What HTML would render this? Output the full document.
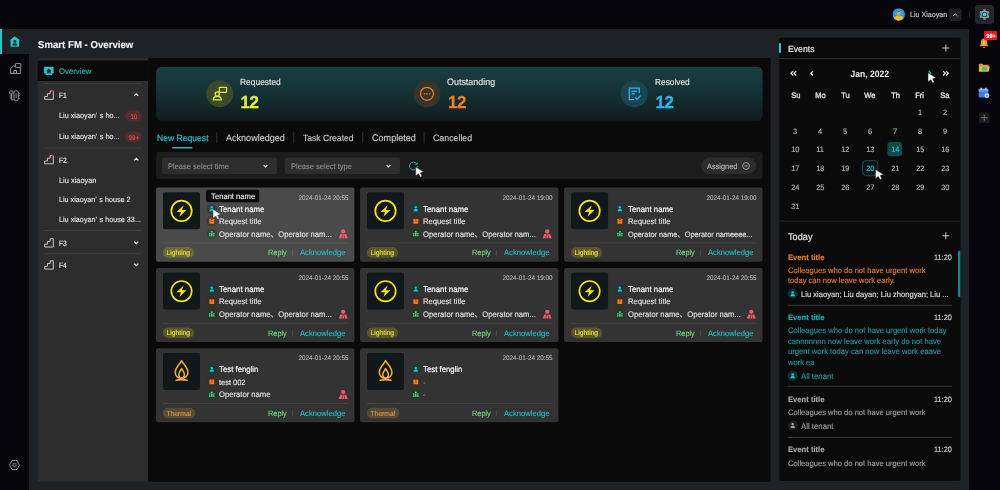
<!DOCTYPE html>
<html lang="en">
<head>
<meta charset="utf-8">
<title>Smart FM - Overview</title>
<style>
*{box-sizing:border-box;margin:0;padding:0}
html,body{width:1000px;height:490px;overflow:hidden;background:#05050b}
body{font-family:"Liberation Sans","Noto Sans CJK SC",sans-serif;color:#e6e6e6;font-size:8px;line-height:1;position:relative;-webkit-font-smoothing:antialiased}
#wrap{position:absolute;left:0;top:0;width:1000px;height:490px;overflow:hidden;will-change:transform}
.abs{position:absolute}
.t{position:absolute;white-space:nowrap;line-height:12px;height:12px;transform-origin:left center;-webkit-text-stroke:.12px}
svg{position:absolute;overflow:visible}
.cj{display:inline-block;width:.56em}
/* frame */
#topbar{left:0;top:0;width:1000px;height:29px;background:#05050b}
#leftnav{left:0;top:29px;width:29px;height:461px;background:#05050b}
#rightnav{left:969px;top:29px;width:31px;height:461px;background:#05050b}
#main{left:29px;top:29px;width:940px;height:461px;background:#1c2226}
#navact{left:0;top:29px;width:29px;height:25px;background:#1c2226;border-left:2px solid #1fc8cf}
.num{position:absolute;font-weight:bold;font-size:16.9px;line-height:18px;letter-spacing:-.3px}
</style>
</head>
<body>
<div id="wrap">
<div id="topbar" class="abs"></div>
<div id="leftnav" class="abs"></div>
<div id="rightnav" class="abs"></div>
<div id="main" class="abs"></div>
<div id="navact" class="abs"></div>

<svg style="left:37px;top:58px" width="112" height="424"><rect x="0.60" y="0.00" width="110.60" height="423.70" fill="#2d2d2d" rx="1.5"/></svg>
<svg style="left:37px;top:60px" width="112" height="21"><rect x="0.60" y="0.50" width="110.60" height="20.50" fill="#0a0a0a"/></svg>
<svg style="left:148px;top:58px" width="623" height="424"><rect x="0.10" y="0.00" width="622.50" height="423.70" fill="#0a0a0a" rx="1.5"/></svg>
<svg style="left:779px;top:37px" width="182" height="444"><rect x="0.30" y="0.60" width="181.20" height="443.30" fill="#0a0a0a" rx="2.5"/></svg>

<svg style="left:892px;top:8px" width="13" height="13"><g transform="translate(0.5 0.2)"><defs><clipPath id="av"><circle cx="6.25" cy="6.25" r="6.25"/></clipPath></defs><g clip-path="url(#av)"><rect width="12.5" height="12.5" fill="#2a9ed8"/><ellipse cx="6.25" cy="12" rx="5.6" ry="4.6" fill="#f2c417"/><rect x="5.1" y="5.5" width="2.3" height="3" fill="#c98e6a"/><circle cx="6.25" cy="4.6" r="2.2" fill="#d9a27e"/><path d="M4 4.2 Q6.25 1.2 8.5 4.2 Q6.25 2.9 4 4.2Z" fill="#3a2a20"/></g></g></svg>
<div class="t" style="top:9.02px;font-size:7.47px;color:#d0d0d0;left:909.60px;transform:matrix(0.9528,0,.0005,1,0,0);">Liu Xiaoyan</div>
<svg style="left:949px;top:8px" width="13" height="13"><rect x="0.00" y="0.50" width="12.50" height="12.50" fill="#1d2125" rx="2"/></svg>
<svg style="left:949px;top:8px" width="13" height="13"><g transform="translate(0 0.5)"><path d="M4 7.4 L6.25 5.2 L8.5 7.4" fill="none" stroke="#d8d8d8" stroke-width=".95"/></g></svg>
<svg style="left:969px;top:11px" width="1" height="7"><rect x="0.00" y="0.00" width="1.00" height="7.00" fill="#1d2226"/></svg>
<svg style="left:975px;top:5px" width="19" height="19"><rect x="0.00" y="0.00" width="19.00" height="19.00" fill="#22282c" rx="3"/></svg>
<svg style="left:978px;top:8px" width="13" height="13"><g transform="translate(0.5 0.5)"><g transform="translate(6 6)"><g fill="#8a949a"><circle r="3.9"/><rect x="-1.2" y="-5.2" width="2.4" height="10.4" rx=".5"/><rect x="-1.2" y="-5.2" width="2.4" height="10.4" rx=".5" transform="rotate(60)"/><rect x="-1.2" y="-5.2" width="2.4" height="10.4" rx=".5" transform="rotate(120)"/></g><circle r="2.6" fill="#22282c"/><circle r="1.9" fill="#1fd8e0"/></g></g></svg>
<svg style="left:9px;top:36px" width="12" height="11"><g transform="translate(0.3 0)"><path d="M5.5 .2 L10.8 4.6 L9.7 4.6 L9.7 10.8 L1.3 10.8 L1.3 4.6 L.2 4.6 Z" fill="#1fc8cf"/><circle cx="5.5" cy="5.3" r="1.5" fill="#1c2226"/><rect x="3.2" y="7.4" width="4.6" height="2.2" rx=".6" fill="#1c2226"/></g></svg>
<svg style="left:10px;top:63px" width="12" height="11"><g transform="translate(0 0)"><g fill="none" stroke="#9a9a9a" stroke-width="1" stroke-linejoin="round"><path d="M.7 10.5 V5.4 L3.7 2.5 L5.4 4"/><path d="M.7 10.5 H10.4 V4.4"/><rect x="5.5" y=".6" width="5.3" height="3.7" rx=".5"/><path d="M3.9 10.5 V7.5 H6.5 V10.5"/></g></g></svg>
<svg style="left:9px;top:90px" width="12" height="12"><g transform="translate(0 0.3)"><g fill="none" stroke="#9a9a9a" stroke-width=".95" stroke-linejoin="round"><rect x=".7" y=".7" width="3.3" height="2.9" rx=".5"/><path d="M2.3 3.6 V9.4 H4.6 M.8 5.6 H3.6 M.8 7.6 H3.6"/><rect x="5" y=".6" width="4.3" height="9.8" rx="1.6"/><path d="M9.3 3 H10.9 M9.3 5.5 H10.9 M9.3 8 H10.9"/><path d="M7.1 3 V7.6"/></g></g></svg>
<svg style="left:9px;top:459px" width="11" height="12"><g transform="translate(0 0.5)"><g fill="none" stroke="#9a9a9a" stroke-width=".9"><path d="M3 .9 H8 L10.5 5.5 L8 10.1 H3 L.5 5.5 Z"/><circle cx="5.5" cy="5.5" r="1.7"/></g></g></svg>
<div class="t" style="top:39.02px;font-size:9.94px;color:#f2f2f2;font-weight:bold;left:38.00px;transform:matrix(0.9712,0,.0005,1,0,0);">Smart FM - Overview</div>
<svg style="left:979px;top:38px" width="10" height="11"><g transform="translate(0 0)"><path d="M5 .6 C2.6 .6 1.9 2.6 1.9 4.6 C1.9 6.6 1.2 7.4 .5 8.2 H9.5 C8.8 7.4 8.1 6.6 8.1 4.6 C8.1 2.6 7.4 .6 5 .6Z" fill="#e9963a"/><path d="M3.9 8.9 A1.1 1.1 0 0 0 6.1 8.9Z" fill="#e9963a"/><rect x="4.2" y="3.2" width="1.6" height="3.4" rx=".6" fill="#f6c77a"/></g></svg>
<svg style="left:984px;top:31px" width="13" height="9"><rect x="0.00" y="0.00" width="13.00" height="9.00" fill="#f0141e" rx="1"/></svg>
<div class="t" style="top:30.02px;font-size:5.94px;color:#fff;font-weight:bold;left:985.56px;transform:matrix(0.9527,0,.0005,1,0,0);transform-origin:center center;">99+</div>
<svg style="left:978px;top:61px" width="13" height="12"><g transform="translate(0.2 0.8)"><path d="M.6 2 H4.2 L5.2 3 H10.4 V9.8 H.6Z" fill="#d99a1f"/><path d="M2.2 4.6 H11.6 L10.4 9.8 H.6Z" fill="#f1c232"/><rect x="3.6" y="5.4" width="5.4" height="3.2" fill="#4aa3e0"/><rect x="3.6" y="7.2" width="5.4" height="1.4" fill="#5fb85f"/></g></svg>
<svg style="left:977px;top:87px" width="13" height="12"><g transform="translate(0.9 0.2)"><rect x=".8" y="1.6" width="9.6" height="8.6" rx="1" fill="#3b7de0"/><rect x=".8" y="1.6" width="9.6" height="2.6" rx="1" fill="#6ea2f0"/><rect x="2.6" y=".5" width="1.2" height="2.2" fill="#d8e6ff"/><rect x="7.4" y=".5" width="1.2" height="2.2" fill="#d8e6ff"/><circle cx="9" cy="8.4" r="2.4" fill="#dfe9f7"/><path d="M9 7 V9.8 M7.6 8.4 H10.4" stroke="#3b7de0" stroke-width=".8"/></g></svg>
<svg style="left:979px;top:112px" width="11" height="11"><rect x="0.00" y="0.50" width="10.50" height="10.50" fill="#1c1c1c" rx="1"/></svg>
<svg style="left:979px;top:112px" width="11" height="11"><g transform="translate(0 0.5)"><path d="M5.25 2 V8.5 M2 5.25 H8.5" stroke="#7a7a7a" stroke-width=".9"/></g></svg>
<svg style="left:44px;top:66px" width="10" height="10"><g transform="translate(0 0.8)"><rect x="0" y="0" width="9.6" height="7" rx="1" fill="#1fc8cf"/><rect x="1.6" y="7" width="6.4" height="1.3" fill="#1fc8cf"/><path d="M4.8 1.6 L7.4 3.9 H6.7 V6 H2.9 V3.9 H2.2Z" fill="#0a0a0a"/></g></svg>
<div class="t" style="top:66.02px;font-size:8.17px;color:#1fb9c1;left:58.70px;transform:matrix(0.9529,0,.0005,1,0,0);">Overview</div>
<svg style="left:43px;top:83px" width="99" height="1"><rect x="0.50" y="0.00" width="98.00" height="1.00" fill="#3d3d3d"/></svg>
<svg style="left:44px;top:90px" width="10" height="11"><g transform="translate(0 0.3)"><path d="M.7 9 V6.2 H3.4 V3.4 H6.2 V.7 H9.3 V9 Z" fill="none" stroke="#c8c8c8" stroke-width="1" stroke-linejoin="miter"/><circle cx="8.6" cy=".7" r="1.15" fill="#f01414"/></g></svg>
<div class="t" style="top:90.02px;font-size:7.68px;color:#f0f0f0;left:59.00px;-webkit-text-stroke:.12px #f0f0f0;transform:matrix(0.8696,0,.0005,1,0,0);">F1</div>
<svg style="left:136px;top:94px" width="2" height="2"><g transform="translate(0.3 0.9)"><path d="M-2 1 L0 -1 L2 1" fill="none" stroke="#ececec" stroke-width="1.25"/></g></svg>
<div class="t" style="top:110.02px;font-size:7.64px;color:#e4e4e4;left:58.70px;transform:matrix(0.9525,0,.0005,1,0,0);">Liu xiaoyan<span class="cj">’</span>s ho...</div>
<svg style="left:125px;top:110px" width="17" height="11"><rect x="0.00" y="0.50" width="16.60" height="10.40" fill="#542c2c" rx="5.2"/></svg>
<div class="t" style="top:111.02px;font-size:6.8px;color:#dc5350;left:129.52px;transform:matrix(0.9,0,.0005,1,0,0);transform-origin:center center;">10</div>
<div class="t" style="top:131.02px;font-size:7.64px;color:#e4e4e4;left:58.70px;transform:matrix(0.9525,0,.0005,1,0,0);">Liu xiaoyan<span class="cj">’</span>s ho...</div>
<svg style="left:125px;top:131px" width="17" height="11"><rect x="0.00" y="0.50" width="16.60" height="10.40" fill="#542c2c" rx="5.2"/></svg>
<div class="t" style="top:132.02px;font-size:6.8px;color:#dc5350;left:127.53px;transform:matrix(0.9,0,.0005,1,0,0);transform-origin:center center;">99+</div>
<svg style="left:43px;top:147px" width="99" height="2"><rect x="0.50" y="0.60" width="98.00" height="1.00" fill="#3d3d3d"/></svg>
<svg style="left:44px;top:154px" width="10" height="11"><g transform="translate(0 0.8)"><path d="M.7 9 V6.2 H3.4 V3.4 H6.2 V.7 H9.3 V9 Z" fill="none" stroke="#c8c8c8" stroke-width="1" stroke-linejoin="miter"/><circle cx="8.6" cy=".7" r="1.15" fill="#f01414"/></g></svg>
<div class="t" style="top:155.02px;font-size:7.68px;color:#f0f0f0;left:59.00px;-webkit-text-stroke:.12px #f0f0f0;transform:matrix(0.8696,0,.0005,1,0,0);">F2</div>
<svg style="left:136px;top:159px" width="2" height="2"><g transform="translate(0.3 0.4)"><path d="M-2 1 L0 -1 L2 1" fill="none" stroke="#ececec" stroke-width="1.25"/></g></svg>
<div class="t" style="top:175.02px;font-size:7.78px;color:#e4e4e4;left:58.70px;transform:matrix(0.9529,0,.0005,1,0,0);">Liu xiaoyan</div>
<div class="t" style="top:194.02px;font-size:7.54px;color:#e4e4e4;left:58.70px;transform:matrix(0.9529,0,.0005,1,0,0);">Liu xiaoyan<span class="cj">’</span>s house 2</div>
<div class="t" style="top:214.02px;font-size:7.59px;color:#e4e4e4;left:58.70px;transform:matrix(0.9525,0,.0005,1,0,0);">Liu xiaoyan<span class="cj">’</span>s house 33...</div>
<svg style="left:43px;top:230px" width="99" height="1"><rect x="0.50" y="0.00" width="98.00" height="1.00" fill="#3d3d3d"/></svg>
<svg style="left:44px;top:238px" width="10" height="10"><g transform="translate(0 0)"><path d="M.7 9 V6.2 H3.4 V3.4 H6.2 V.7 H9.3 V9 Z" fill="none" stroke="#c8c8c8" stroke-width="1" stroke-linejoin="miter"/></g></svg>
<div class="t" style="top:238.02px;font-size:7.68px;color:#f0f0f0;left:59.00px;-webkit-text-stroke:.12px #f0f0f0;transform:matrix(0.8696,0,.0005,1,0,0);">F3</div>
<svg style="left:136px;top:242px" width="2" height="2"><g transform="translate(0.3 0.6)"><path d="M-2 -1 L0 1 L2 -1" fill="none" stroke="#ececec" stroke-width="1.25"/></g></svg>
<svg style="left:43px;top:253px" width="99" height="2"><rect x="0.50" y="0.20" width="98.00" height="1.00" fill="#3d3d3d"/></svg>
<svg style="left:44px;top:260px" width="10" height="11"><g transform="translate(0 0.1)"><path d="M.7 9 V6.2 H3.4 V3.4 H6.2 V.7 H9.3 V9 Z" fill="none" stroke="#c8c8c8" stroke-width="1" stroke-linejoin="miter"/></g></svg>
<div class="t" style="top:260.02px;font-size:7.68px;color:#f0f0f0;left:59.00px;-webkit-text-stroke:.12px #f0f0f0;transform:matrix(0.8696,0,.0005,1,0,0);">F4</div>
<svg style="left:136px;top:264px" width="2" height="2"><g transform="translate(0.3 0.7)"><path d="M-2 -1 L0 1 L2 -1" fill="none" stroke="#ececec" stroke-width="1.25"/></g></svg>
<svg style="left:156px;top:66px" width="607" height="56"><g transform="translate(0 0)"><defs><linearGradient id="sg" x1="0" y1="0" x2="0" y2="1"><stop offset="0" stop-color="#1a3f43"/><stop offset=".45" stop-color="#163236"/><stop offset="1" stop-color="#0f1c1e"/></linearGradient></defs><rect x=".1" y=".8" width="606.5" height="54" rx="5.5" fill="url(#sg)"/></g></svg>
<svg style="left:206px;top:80px" width="28" height="28"><g transform="translate(0.3 0.3)"><circle cx="13.5" cy="13.5" r="13.5" fill="#3a4a2c"/></g></svg>
<svg style="left:212px;top:86px" width="16" height="16"><g transform="translate(0.3 0.3) scale(1.25 1.25)"><g fill="none" stroke="#e4f03a" stroke-width=".95"><rect x="5.6" y=".8" width="5.8" height="4" rx=".4"/><circle cx="4" cy="6.2" r="1.7"/><path d="M.8 10.8 C.8 8.6 2.2 8 4 8 C5.8 8 7.2 8.6 7.2 10.8 Z"/></g></g></svg>
<div class="t" style="top:76.02px;font-size:8.85px;color:#e4e4e4;left:239.50px;transform:matrix(0.9528,0,.0005,1,0,0);">Requested</div>
<div class="num" style="left:240.4px;top:93.9px;color:#e0f03c;-webkit-text-stroke:.3px #e0f03c">12</div>
<svg style="left:413px;top:80px" width="28" height="28"><g transform="translate(0.5 0.3)"><circle cx="13.5" cy="13.5" r="13.5" fill="#37342b"/></g></svg>
<svg style="left:419px;top:86px" width="16" height="16"><g transform="translate(0.5 0.3) scale(1.25 1.25)"><g fill="none" stroke="#ef7d2a"><circle cx="6" cy="6" r="5.2" stroke-width="1"/><path d="M3.4 6 H8.6" stroke-width="1" stroke-dasharray="1.2 .8"/></g></g></svg>
<div class="t" style="top:76.02px;font-size:9.38px;color:#e4e4e4;left:447.00px;transform:matrix(0.9526,0,.0005,1,0,0);">Outstanding</div>
<div class="num" style="left:447.9px;top:93.9px;color:#ef7d2a;-webkit-text-stroke:.3px #ef7d2a">12</div>
<svg style="left:620px;top:80px" width="28" height="28"><g transform="translate(0.8 0.3)"><circle cx="13.5" cy="13.5" r="13.5" fill="#1b4550"/></g></svg>
<svg style="left:626px;top:86px" width="16" height="16"><g transform="translate(0.8 0.3) scale(1.25 1.25)"><g fill="none" stroke="#2bb5ef" stroke-width="1"><path d="M10 5.4 V1.4 H2 V10.6 H6"/><path d="M3.8 4 H8.2 M3.8 6 H6.4" /><path d="M6.8 9 L8.2 10.4 L11 7.4"/></g></g></svg>
<div class="t" style="top:76.02px;font-size:8.76px;color:#e4e4e4;left:654.50px;transform:matrix(0.9526,0,.0005,1,0,0);">Resolved</div>
<div class="num" style="left:655.4px;top:93.9px;color:#2bb5ef;-webkit-text-stroke:.3px #2bb5ef">12</div>
<div class="t" style="top:132.02px;font-size:9.02px;color:#21c0c8;left:156.80px;-webkit-text-stroke:.2px #21c0c8;transform:matrix(0.9523,0,.0005,1,0,0);">New Request</div>
<div class="t" style="top:132.02px;font-size:9.5px;color:#cfcfcf;left:225.80px;transform:matrix(0.9528,0,.0005,1,0,0);">Acknowledged</div>
<div class="t" style="top:132.02px;font-size:9.03px;color:#cfcfcf;left:303.00px;transform:matrix(0.9522,0,.0005,1,0,0);">Task Created</div>
<div class="t" style="top:132.02px;font-size:9.52px;color:#cfcfcf;left:371.50px;transform:matrix(0.9525,0,.0005,1,0,0);">Completed</div>
<div class="t" style="top:132.02px;font-size:9.24px;color:#cfcfcf;left:432.50px;transform:matrix(0.9528,0,.0005,1,0,0);">Cancelled</div>
<svg style="left:216px;top:132px" width="2" height="12"><rect x="0.30" y="0.30" width="1.00" height="11.00" fill="#333333"/></svg>
<svg style="left:293px;top:132px" width="2" height="12"><rect x="0.30" y="0.30" width="1.00" height="11.00" fill="#333333"/></svg>
<svg style="left:362px;top:132px" width="2" height="12"><rect x="0.30" y="0.30" width="1.00" height="11.00" fill="#333333"/></svg>
<svg style="left:423px;top:132px" width="2" height="12"><rect x="0.60" y="0.30" width="1.00" height="11.00" fill="#333333"/></svg>
<svg style="left:172px;top:146px" width="21" height="3"><rect x="0.00" y="0.90" width="20.50" height="1.50" fill="#1fb9c1" rx="0.75"/></svg>
<svg style="left:156px;top:152px" width="607" height="27"><rect x="0.20" y="0.00" width="606.30" height="27.00" fill="#1c1c1c" rx="2"/></svg>
<svg style="left:162px;top:157px" width="115" height="17"><rect x="0.00" y="0.50" width="115.00" height="16.50" fill="#2d2d2d" rx="2"/></svg>
<div class="t" style="top:161.02px;font-size:7.9px;color:#8c8c8c;left:168.30px;transform:matrix(0.9523,0,.0005,1,0,0);">Please select time</div>
<svg style="left:265px;top:165px" width="2" height="2"><g transform="translate(0.5 0.9)"><path d="M-1.8 -.8 L0 1 L1.8 -.8" fill="none" stroke="#e4e4e4" stroke-width="1.25"/></g></svg>
<svg style="left:285px;top:157px" width="115" height="17"><rect x="0.00" y="0.50" width="115.00" height="16.50" fill="#2d2d2d" rx="2"/></svg>
<div class="t" style="top:161.02px;font-size:7.9px;color:#8c8c8c;left:291.30px;transform:matrix(0.952,0,.0005,1,0,0);">Please select type</div>
<svg style="left:388px;top:165px" width="2" height="2"><g transform="translate(0.5 0.9)"><path d="M-1.8 -.8 L0 1 L1.8 -.8" fill="none" stroke="#e4e4e4" stroke-width="1.25"/></g></svg>
<svg style="left:408px;top:160px" width="11" height="11"><g transform="translate(0.4 0.6)"><path d="M8.2 3.2 A3.9 3.9 0 1 0 8.9 5.4" fill="none" stroke="#1fb9c1" stroke-width=".9"/><path d="M8.8 1.6 V3.6 H6.8" fill="none" stroke="#1fb9c1" stroke-width=".9"/></g></svg>
<svg style="left:701px;top:157px" width="56" height="17"><rect x="0.30" y="0.50" width="55.00" height="16.50" fill="#2d2d2d" rx="8.25"/></svg>
<div class="t" style="top:161.02px;font-size:7.79px;color:#b8b8b8;left:707.00px;transform:matrix(0.9522,0,.0005,1,0,0);">Assigned</div>
<svg style="left:742px;top:162px" width="8" height="8"><g transform="translate(0 0)"><circle cx="4" cy="4" r="3.4" fill="none" stroke="#b8b8b8" stroke-width=".8"/><path d="M2.2 4 H5.8" stroke="#b8b8b8" stroke-width=".8"/></g></svg>
<svg style="left:156px;top:187px" width="199" height="75"><rect x="0.00" y="0.60" width="198.40" height="74.10" fill="#4a4a4a" rx="2"/></svg>
<svg style="left:163px;top:192px" width="37" height="38"><rect x="0.00" y="0.30" width="37.00" height="37.00" fill="#12171a" rx="2"/></svg>
<svg style="left:163px;top:192px" width="37" height="38"><g transform="translate(0 0.3)"><circle cx="18.5" cy="18.6" r="10.2" fill="none" stroke="#f5e616" stroke-width="1.7"/><path d="M20.6 13 L13.6 19.6 H18 L16.4 24.4 L23.4 17.6 H19 Z" fill="#f5e616"/></g></svg>
<div class="t" style="top:192.02px;font-size:6.66px;color:#b4b4b4;left:295.56px;transform:matrix(0.9517,0,.0005,1,0,0);transform-origin:right center;">2024-01-24 20:55</div>
<svg style="left:206px;top:203px" width="11" height="11"><g transform="translate(0.7 0.8) scale(1.062 1.062)"><circle cx="4.8" cy="4.8" r="4.8" fill="rgba(14,60,64,.55)"/><circle cx="4.8" cy="3.3" r="1.15" fill="#21c3cb"/><path d="M2.7 7 C2.7 5.5 3.6 4.9 4.8 4.9 C6 4.9 6.9 5.5 6.9 7Z" fill="#21c3cb"/></g></svg>
<svg style="left:206px;top:216px" width="11" height="11"><g transform="translate(0.7 0.2) scale(1.062 1.062)"><circle cx="4.8" cy="4.8" r="4.8" fill="rgba(74,40,18,.5)"/><rect x="2.5" y="2.5" width="4.6" height="4.6" rx=".4" fill="#ef7d2a"/><rect x="4.2" y="2.5" width="1.2" height="1.3" fill="#5a3418"/><rect x="3.5" y="4.6" width="2.6" height=".8" fill="#b85d1c"/></g></svg>
<svg style="left:206px;top:228px" width="11" height="11"><g transform="translate(0.7 0.7) scale(1.062 1.062)"><circle cx="4.8" cy="4.8" r="4.8" fill="rgba(24,66,40,.5)"/><g fill="#5fe08a"><circle cx="4.8" cy="2.9" r=".85"/><rect x="4.15" y="4" width="1.3" height="3.2" rx=".4"/><circle cx="2.9" cy="4.5" r=".7"/><rect x="2.35" y="5.4" width="1.1" height="1.8" rx=".3"/><circle cx="6.7" cy="4.5" r=".7"/><rect x="6.15" y="5.4" width="1.1" height="1.8" rx=".3"/></g></g></svg>
<div class="t" style="top:204.02px;font-size:8.26px;color:#ffffff;left:219.40px;-webkit-text-stroke:.16px #fff;transform:matrix(0.9525,0,.0005,1,0,0);">Tenant name</div>
<div class="t" style="top:216.02px;font-size:8.03px;color:#e4e4e4;left:219.40px;transform:matrix(0.9525,0,.0005,1,0,0);">Request title</div>
<div class="t" style="top:229.02px;font-size:8.06px;color:#e4e4e4;left:219.40px;transform:matrix(0.9522,0,.0005,1,0,0);">Operator name、Operator nam...</div>
<svg style="left:338px;top:229px" width="10" height="10"><g transform="translate(0.7 0.2)"><g fill="#f45c66"><circle cx="4.5" cy="2.3" r="2.15"/><path d="M1.6 4.9 H3.5 L2.9 9.1 H0 Z"/><path d="M4 5.3 L4.5 4.9 L5 5.3 L5.5 9.1 H3.5 Z"/><path d="M5.5 4.9 H7.4 L9 9.1 H6.1 Z"/></g></g></svg>
<svg style="left:163px;top:242px" width="186" height="2"><rect x="0.00" y="0.40" width="185.50" height="1.00" fill="#5a5a5a"/></svg>
<svg style="left:162px;top:247px" width="32" height="11"><rect x="0.80" y="0.10" width="31.20" height="10.60" fill="rgba(245,230,22,.2)" rx="5.3"/></svg>
<div class="t" style="top:247.02px;font-size:7.05px;color:#f0e22c;left:165.96px;transform:matrix(0.9519,0,.0005,1,0,0);transform-origin:center center;">Lighting</div>
<div class="t" style="top:247.02px;font-size:7.72px;color:#6fdc7c;left:267.80px;transform:matrix(0.9527,0,.0005,1,0,0);">Reply</div>
<svg style="left:291px;top:249px" width="2" height="7"><rect x="0.80" y="0.70" width="1.00" height="6.20" fill="#606060"/></svg>
<div class="t" style="top:247.02px;font-size:8.03px;color:#22bcc6;left:300.20px;transform:matrix(0.9527,0,.0005,1,0,0);">Acknowledge</div>
<svg style="left:360px;top:187px" width="199" height="75"><rect x="0.00" y="0.60" width="198.40" height="74.10" fill="#333333" rx="2"/></svg>
<svg style="left:367px;top:192px" width="37" height="38"><rect x="0.00" y="0.30" width="37.00" height="37.00" fill="#12171a" rx="2"/></svg>
<svg style="left:367px;top:192px" width="37" height="38"><g transform="translate(0 0.3)"><circle cx="18.5" cy="18.6" r="10.2" fill="none" stroke="#f5e616" stroke-width="1.7"/><path d="M20.6 13 L13.6 19.6 H18 L16.4 24.4 L23.4 17.6 H19 Z" fill="#f5e616"/></g></svg>
<div class="t" style="top:192.02px;font-size:6.66px;color:#b4b4b4;left:499.56px;transform:matrix(0.9517,0,.0005,1,0,0);transform-origin:right center;">2024-01-24 19:00</div>
<svg style="left:410px;top:203px" width="11" height="11"><g transform="translate(0.7 0.8) scale(1.062 1.062)"><circle cx="4.8" cy="4.8" r="4.8" fill="rgba(14,60,64,.55)"/><circle cx="4.8" cy="3.3" r="1.15" fill="#21c3cb"/><path d="M2.7 7 C2.7 5.5 3.6 4.9 4.8 4.9 C6 4.9 6.9 5.5 6.9 7Z" fill="#21c3cb"/></g></svg>
<svg style="left:410px;top:216px" width="11" height="11"><g transform="translate(0.7 0.2) scale(1.062 1.062)"><circle cx="4.8" cy="4.8" r="4.8" fill="rgba(74,40,18,.5)"/><rect x="2.5" y="2.5" width="4.6" height="4.6" rx=".4" fill="#ef7d2a"/><rect x="4.2" y="2.5" width="1.2" height="1.3" fill="#5a3418"/><rect x="3.5" y="4.6" width="2.6" height=".8" fill="#b85d1c"/></g></svg>
<svg style="left:410px;top:228px" width="11" height="11"><g transform="translate(0.7 0.7) scale(1.062 1.062)"><circle cx="4.8" cy="4.8" r="4.8" fill="rgba(24,66,40,.5)"/><g fill="#5fe08a"><circle cx="4.8" cy="2.9" r=".85"/><rect x="4.15" y="4" width="1.3" height="3.2" rx=".4"/><circle cx="2.9" cy="4.5" r=".7"/><rect x="2.35" y="5.4" width="1.1" height="1.8" rx=".3"/><circle cx="6.7" cy="4.5" r=".7"/><rect x="6.15" y="5.4" width="1.1" height="1.8" rx=".3"/></g></g></svg>
<div class="t" style="top:204.02px;font-size:8.26px;color:#ffffff;left:423.40px;-webkit-text-stroke:.16px #fff;transform:matrix(0.9525,0,.0005,1,0,0);">Tenant name</div>
<div class="t" style="top:216.02px;font-size:8.03px;color:#e4e4e4;left:423.40px;transform:matrix(0.9525,0,.0005,1,0,0);">Request title</div>
<div class="t" style="top:229.02px;font-size:8.06px;color:#e4e4e4;left:423.40px;transform:matrix(0.9522,0,.0005,1,0,0);">Operator name、Operator nam...</div>
<svg style="left:542px;top:229px" width="10" height="10"><g transform="translate(0.7 0.2)"><g fill="#f45c66"><circle cx="4.5" cy="2.3" r="2.15"/><path d="M1.6 4.9 H3.5 L2.9 9.1 H0 Z"/><path d="M4 5.3 L4.5 4.9 L5 5.3 L5.5 9.1 H3.5 Z"/><path d="M5.5 4.9 H7.4 L9 9.1 H6.1 Z"/></g></g></svg>
<svg style="left:367px;top:242px" width="186" height="2"><rect x="0.00" y="0.40" width="185.50" height="1.00" fill="#444444"/></svg>
<svg style="left:366px;top:247px" width="32" height="11"><rect x="0.80" y="0.10" width="31.20" height="10.60" fill="rgba(245,230,22,.2)" rx="5.3"/></svg>
<div class="t" style="top:247.02px;font-size:7.05px;color:#f0e22c;left:369.96px;transform:matrix(0.9519,0,.0005,1,0,0);transform-origin:center center;">Lighting</div>
<div class="t" style="top:247.02px;font-size:7.72px;color:#6fdc7c;left:471.80px;transform:matrix(0.9527,0,.0005,1,0,0);">Reply</div>
<svg style="left:495px;top:249px" width="2" height="7"><rect x="0.80" y="0.70" width="1.00" height="6.20" fill="#4c4c4c"/></svg>
<div class="t" style="top:247.02px;font-size:8.03px;color:#22bcc6;left:504.20px;transform:matrix(0.9527,0,.0005,1,0,0);">Acknowledge</div>
<svg style="left:564px;top:187px" width="199" height="75"><rect x="0.10" y="0.60" width="198.40" height="74.10" fill="#333333" rx="2"/></svg>
<svg style="left:571px;top:192px" width="38" height="38"><rect x="0.10" y="0.30" width="37.00" height="37.00" fill="#12171a" rx="2"/></svg>
<svg style="left:571px;top:192px" width="38" height="38"><g transform="translate(0.1 0.3)"><circle cx="18.5" cy="18.6" r="10.2" fill="none" stroke="#f5e616" stroke-width="1.7"/><path d="M20.6 13 L13.6 19.6 H18 L16.4 24.4 L23.4 17.6 H19 Z" fill="#f5e616"/></g></svg>
<div class="t" style="top:192.02px;font-size:6.66px;color:#b4b4b4;left:703.66px;transform:matrix(0.9517,0,.0005,1,0,0);transform-origin:right center;">2024-01-24 19:00</div>
<svg style="left:614px;top:203px" width="11" height="11"><g transform="translate(0.8 0.8) scale(1.062 1.062)"><circle cx="4.8" cy="4.8" r="4.8" fill="rgba(14,60,64,.55)"/><circle cx="4.8" cy="3.3" r="1.15" fill="#21c3cb"/><path d="M2.7 7 C2.7 5.5 3.6 4.9 4.8 4.9 C6 4.9 6.9 5.5 6.9 7Z" fill="#21c3cb"/></g></svg>
<svg style="left:614px;top:216px" width="11" height="11"><g transform="translate(0.8 0.2) scale(1.062 1.062)"><circle cx="4.8" cy="4.8" r="4.8" fill="rgba(74,40,18,.5)"/><rect x="2.5" y="2.5" width="4.6" height="4.6" rx=".4" fill="#ef7d2a"/><rect x="4.2" y="2.5" width="1.2" height="1.3" fill="#5a3418"/><rect x="3.5" y="4.6" width="2.6" height=".8" fill="#b85d1c"/></g></svg>
<svg style="left:614px;top:228px" width="11" height="11"><g transform="translate(0.8 0.7) scale(1.062 1.062)"><circle cx="4.8" cy="4.8" r="4.8" fill="rgba(24,66,40,.5)"/><g fill="#5fe08a"><circle cx="4.8" cy="2.9" r=".85"/><rect x="4.15" y="4" width="1.3" height="3.2" rx=".4"/><circle cx="2.9" cy="4.5" r=".7"/><rect x="2.35" y="5.4" width="1.1" height="1.8" rx=".3"/><circle cx="6.7" cy="4.5" r=".7"/><rect x="6.15" y="5.4" width="1.1" height="1.8" rx=".3"/></g></g></svg>
<div class="t" style="top:204.02px;font-size:8.26px;color:#ffffff;left:627.50px;-webkit-text-stroke:.16px #fff;transform:matrix(0.9525,0,.0005,1,0,0);">Tenant name</div>
<div class="t" style="top:216.02px;font-size:8.03px;color:#e4e4e4;left:627.50px;transform:matrix(0.9525,0,.0005,1,0,0);">Request title</div>
<div class="t" style="top:229.02px;font-size:7.71px;color:#e4e4e4;left:627.50px;transform:matrix(0.9528,0,.0005,1,0,0);">Operator name、Operator nameeee...</div>
<svg style="left:571px;top:242px" width="186" height="2"><rect x="0.10" y="0.40" width="185.50" height="1.00" fill="#444444"/></svg>
<svg style="left:570px;top:247px" width="33" height="11"><rect x="0.90" y="0.10" width="31.20" height="10.60" fill="rgba(245,230,22,.2)" rx="5.3"/></svg>
<div class="t" style="top:247.02px;font-size:7.05px;color:#f0e22c;left:574.06px;transform:matrix(0.9519,0,.0005,1,0,0);transform-origin:center center;">Lighting</div>
<div class="t" style="top:247.02px;font-size:7.72px;color:#6fdc7c;left:675.90px;transform:matrix(0.9527,0,.0005,1,0,0);">Reply</div>
<svg style="left:699px;top:249px" width="2" height="7"><rect x="0.90" y="0.70" width="1.00" height="6.20" fill="#4c4c4c"/></svg>
<div class="t" style="top:247.02px;font-size:8.03px;color:#22bcc6;left:708.30px;transform:matrix(0.9527,0,.0005,1,0,0);">Acknowledge</div>
<svg style="left:156px;top:267px" width="199" height="75"><rect x="0.00" y="0.90" width="198.40" height="74.10" fill="#333333" rx="2"/></svg>
<svg style="left:163px;top:272px" width="37" height="38"><rect x="0.00" y="0.60" width="37.00" height="37.00" fill="#12171a" rx="2"/></svg>
<svg style="left:163px;top:272px" width="37" height="38"><g transform="translate(0 0.6)"><circle cx="18.5" cy="18.6" r="10.2" fill="none" stroke="#f5e616" stroke-width="1.7"/><path d="M20.6 13 L13.6 19.6 H18 L16.4 24.4 L23.4 17.6 H19 Z" fill="#f5e616"/></g></svg>
<div class="t" style="top:272.02px;font-size:6.66px;color:#b4b4b4;left:295.56px;transform:matrix(0.9517,0,.0005,1,0,0);transform-origin:right center;">2024-01-24 20:55</div>
<svg style="left:206px;top:284px" width="11" height="11"><g transform="translate(0.7 0.1) scale(1.062 1.062)"><circle cx="4.8" cy="4.8" r="4.8" fill="rgba(14,60,64,.55)"/><circle cx="4.8" cy="3.3" r="1.15" fill="#21c3cb"/><path d="M2.7 7 C2.7 5.5 3.6 4.9 4.8 4.9 C6 4.9 6.9 5.5 6.9 7Z" fill="#21c3cb"/></g></svg>
<svg style="left:206px;top:296px" width="11" height="11"><g transform="translate(0.7 0.5) scale(1.062 1.062)"><circle cx="4.8" cy="4.8" r="4.8" fill="rgba(74,40,18,.5)"/><rect x="2.5" y="2.5" width="4.6" height="4.6" rx=".4" fill="#ef7d2a"/><rect x="4.2" y="2.5" width="1.2" height="1.3" fill="#5a3418"/><rect x="3.5" y="4.6" width="2.6" height=".8" fill="#b85d1c"/></g></svg>
<svg style="left:206px;top:309px" width="11" height="11"><g transform="translate(0.7 0) scale(1.062 1.062)"><circle cx="4.8" cy="4.8" r="4.8" fill="rgba(24,66,40,.5)"/><g fill="#5fe08a"><circle cx="4.8" cy="2.9" r=".85"/><rect x="4.15" y="4" width="1.3" height="3.2" rx=".4"/><circle cx="2.9" cy="4.5" r=".7"/><rect x="2.35" y="5.4" width="1.1" height="1.8" rx=".3"/><circle cx="6.7" cy="4.5" r=".7"/><rect x="6.15" y="5.4" width="1.1" height="1.8" rx=".3"/></g></g></svg>
<div class="t" style="top:284.02px;font-size:8.26px;color:#ffffff;left:219.40px;-webkit-text-stroke:.16px #fff;transform:matrix(0.9525,0,.0005,1,0,0);">Tenant name</div>
<div class="t" style="top:296.02px;font-size:8.03px;color:#e4e4e4;left:219.40px;transform:matrix(0.9525,0,.0005,1,0,0);">Request title</div>
<div class="t" style="top:309.02px;font-size:8.06px;color:#e4e4e4;left:219.40px;transform:matrix(0.9522,0,.0005,1,0,0);">Operator name、Operator nam...</div>
<svg style="left:338px;top:309px" width="10" height="10"><g transform="translate(0.7 0.5)"><g fill="#f45c66"><circle cx="4.5" cy="2.3" r="2.15"/><path d="M1.6 4.9 H3.5 L2.9 9.1 H0 Z"/><path d="M4 5.3 L4.5 4.9 L5 5.3 L5.5 9.1 H3.5 Z"/><path d="M5.5 4.9 H7.4 L9 9.1 H6.1 Z"/></g></g></svg>
<svg style="left:163px;top:322px" width="186" height="2"><rect x="0.00" y="0.70" width="185.50" height="1.00" fill="#444444"/></svg>
<svg style="left:162px;top:327px" width="32" height="11"><rect x="0.80" y="0.40" width="31.20" height="10.60" fill="rgba(245,230,22,.2)" rx="5.3"/></svg>
<div class="t" style="top:327.02px;font-size:7.05px;color:#f0e22c;left:165.96px;transform:matrix(0.9519,0,.0005,1,0,0);transform-origin:center center;">Lighting</div>
<div class="t" style="top:328.02px;font-size:7.72px;color:#6fdc7c;left:267.80px;transform:matrix(0.9527,0,.0005,1,0,0);">Reply</div>
<svg style="left:291px;top:330px" width="2" height="7"><rect x="0.80" y="0.00" width="1.00" height="6.20" fill="#4c4c4c"/></svg>
<div class="t" style="top:328.02px;font-size:8.03px;color:#22bcc6;left:300.20px;transform:matrix(0.9527,0,.0005,1,0,0);">Acknowledge</div>
<svg style="left:360px;top:267px" width="199" height="75"><rect x="0.00" y="0.90" width="198.40" height="74.10" fill="#333333" rx="2"/></svg>
<svg style="left:367px;top:272px" width="37" height="38"><rect x="0.00" y="0.60" width="37.00" height="37.00" fill="#12171a" rx="2"/></svg>
<svg style="left:367px;top:272px" width="37" height="38"><g transform="translate(0 0.6)"><circle cx="18.5" cy="18.6" r="10.2" fill="none" stroke="#f5e616" stroke-width="1.7"/><path d="M20.6 13 L13.6 19.6 H18 L16.4 24.4 L23.4 17.6 H19 Z" fill="#f5e616"/></g></svg>
<div class="t" style="top:272.02px;font-size:6.66px;color:#b4b4b4;left:499.56px;transform:matrix(0.9517,0,.0005,1,0,0);transform-origin:right center;">2024-01-24 19:00</div>
<svg style="left:410px;top:284px" width="11" height="11"><g transform="translate(0.7 0.1) scale(1.062 1.062)"><circle cx="4.8" cy="4.8" r="4.8" fill="rgba(14,60,64,.55)"/><circle cx="4.8" cy="3.3" r="1.15" fill="#21c3cb"/><path d="M2.7 7 C2.7 5.5 3.6 4.9 4.8 4.9 C6 4.9 6.9 5.5 6.9 7Z" fill="#21c3cb"/></g></svg>
<svg style="left:410px;top:296px" width="11" height="11"><g transform="translate(0.7 0.5) scale(1.062 1.062)"><circle cx="4.8" cy="4.8" r="4.8" fill="rgba(74,40,18,.5)"/><rect x="2.5" y="2.5" width="4.6" height="4.6" rx=".4" fill="#ef7d2a"/><rect x="4.2" y="2.5" width="1.2" height="1.3" fill="#5a3418"/><rect x="3.5" y="4.6" width="2.6" height=".8" fill="#b85d1c"/></g></svg>
<svg style="left:410px;top:309px" width="11" height="11"><g transform="translate(0.7 0) scale(1.062 1.062)"><circle cx="4.8" cy="4.8" r="4.8" fill="rgba(24,66,40,.5)"/><g fill="#5fe08a"><circle cx="4.8" cy="2.9" r=".85"/><rect x="4.15" y="4" width="1.3" height="3.2" rx=".4"/><circle cx="2.9" cy="4.5" r=".7"/><rect x="2.35" y="5.4" width="1.1" height="1.8" rx=".3"/><circle cx="6.7" cy="4.5" r=".7"/><rect x="6.15" y="5.4" width="1.1" height="1.8" rx=".3"/></g></g></svg>
<div class="t" style="top:284.02px;font-size:8.26px;color:#ffffff;left:423.40px;-webkit-text-stroke:.16px #fff;transform:matrix(0.9525,0,.0005,1,0,0);">Tenant name</div>
<div class="t" style="top:296.02px;font-size:8.03px;color:#e4e4e4;left:423.40px;transform:matrix(0.9525,0,.0005,1,0,0);">Request title</div>
<div class="t" style="top:309.02px;font-size:8.06px;color:#e4e4e4;left:423.40px;transform:matrix(0.9522,0,.0005,1,0,0);">Operator name、Operator nam...</div>
<svg style="left:542px;top:309px" width="10" height="10"><g transform="translate(0.7 0.5)"><g fill="#f45c66"><circle cx="4.5" cy="2.3" r="2.15"/><path d="M1.6 4.9 H3.5 L2.9 9.1 H0 Z"/><path d="M4 5.3 L4.5 4.9 L5 5.3 L5.5 9.1 H3.5 Z"/><path d="M5.5 4.9 H7.4 L9 9.1 H6.1 Z"/></g></g></svg>
<svg style="left:367px;top:322px" width="186" height="2"><rect x="0.00" y="0.70" width="185.50" height="1.00" fill="#444444"/></svg>
<svg style="left:366px;top:327px" width="32" height="11"><rect x="0.80" y="0.40" width="31.20" height="10.60" fill="rgba(245,230,22,.2)" rx="5.3"/></svg>
<div class="t" style="top:327.02px;font-size:7.05px;color:#f0e22c;left:369.96px;transform:matrix(0.9519,0,.0005,1,0,0);transform-origin:center center;">Lighting</div>
<div class="t" style="top:328.02px;font-size:7.72px;color:#6fdc7c;left:471.80px;transform:matrix(0.9527,0,.0005,1,0,0);">Reply</div>
<svg style="left:495px;top:330px" width="2" height="7"><rect x="0.80" y="0.00" width="1.00" height="6.20" fill="#4c4c4c"/></svg>
<div class="t" style="top:328.02px;font-size:8.03px;color:#22bcc6;left:504.20px;transform:matrix(0.9527,0,.0005,1,0,0);">Acknowledge</div>
<svg style="left:564px;top:267px" width="199" height="75"><rect x="0.10" y="0.90" width="198.40" height="74.10" fill="#333333" rx="2"/></svg>
<svg style="left:571px;top:272px" width="38" height="38"><rect x="0.10" y="0.60" width="37.00" height="37.00" fill="#12171a" rx="2"/></svg>
<svg style="left:571px;top:272px" width="38" height="38"><g transform="translate(0.1 0.6)"><circle cx="18.5" cy="18.6" r="10.2" fill="none" stroke="#f5e616" stroke-width="1.7"/><path d="M20.6 13 L13.6 19.6 H18 L16.4 24.4 L23.4 17.6 H19 Z" fill="#f5e616"/></g></svg>
<div class="t" style="top:272.02px;font-size:6.66px;color:#b4b4b4;left:703.66px;transform:matrix(0.9517,0,.0005,1,0,0);transform-origin:right center;">2024-01-24 20:55</div>
<svg style="left:614px;top:284px" width="11" height="11"><g transform="translate(0.8 0.1) scale(1.062 1.062)"><circle cx="4.8" cy="4.8" r="4.8" fill="rgba(14,60,64,.55)"/><circle cx="4.8" cy="3.3" r="1.15" fill="#21c3cb"/><path d="M2.7 7 C2.7 5.5 3.6 4.9 4.8 4.9 C6 4.9 6.9 5.5 6.9 7Z" fill="#21c3cb"/></g></svg>
<svg style="left:614px;top:296px" width="11" height="11"><g transform="translate(0.8 0.5) scale(1.062 1.062)"><circle cx="4.8" cy="4.8" r="4.8" fill="rgba(74,40,18,.5)"/><rect x="2.5" y="2.5" width="4.6" height="4.6" rx=".4" fill="#ef7d2a"/><rect x="4.2" y="2.5" width="1.2" height="1.3" fill="#5a3418"/><rect x="3.5" y="4.6" width="2.6" height=".8" fill="#b85d1c"/></g></svg>
<svg style="left:614px;top:309px" width="11" height="11"><g transform="translate(0.8 0) scale(1.062 1.062)"><circle cx="4.8" cy="4.8" r="4.8" fill="rgba(24,66,40,.5)"/><g fill="#5fe08a"><circle cx="4.8" cy="2.9" r=".85"/><rect x="4.15" y="4" width="1.3" height="3.2" rx=".4"/><circle cx="2.9" cy="4.5" r=".7"/><rect x="2.35" y="5.4" width="1.1" height="1.8" rx=".3"/><circle cx="6.7" cy="4.5" r=".7"/><rect x="6.15" y="5.4" width="1.1" height="1.8" rx=".3"/></g></g></svg>
<div class="t" style="top:284.02px;font-size:8.26px;color:#ffffff;left:627.50px;-webkit-text-stroke:.16px #fff;transform:matrix(0.9525,0,.0005,1,0,0);">Tenant name</div>
<div class="t" style="top:296.02px;font-size:8.03px;color:#e4e4e4;left:627.50px;transform:matrix(0.9525,0,.0005,1,0,0);">Request title</div>
<div class="t" style="top:309.02px;font-size:8.06px;color:#e4e4e4;left:627.50px;transform:matrix(0.9522,0,.0005,1,0,0);">Operator name、Operator nam...</div>
<svg style="left:746px;top:309px" width="10" height="10"><g transform="translate(0.8 0.5)"><g fill="#f45c66"><circle cx="4.5" cy="2.3" r="2.15"/><path d="M1.6 4.9 H3.5 L2.9 9.1 H0 Z"/><path d="M4 5.3 L4.5 4.9 L5 5.3 L5.5 9.1 H3.5 Z"/><path d="M5.5 4.9 H7.4 L9 9.1 H6.1 Z"/></g></g></svg>
<svg style="left:571px;top:322px" width="186" height="2"><rect x="0.10" y="0.70" width="185.50" height="1.00" fill="#444444"/></svg>
<svg style="left:570px;top:327px" width="33" height="11"><rect x="0.90" y="0.40" width="31.20" height="10.60" fill="rgba(245,230,22,.2)" rx="5.3"/></svg>
<div class="t" style="top:327.02px;font-size:7.05px;color:#f0e22c;left:574.06px;transform:matrix(0.9519,0,.0005,1,0,0);transform-origin:center center;">Lighting</div>
<div class="t" style="top:328.02px;font-size:7.72px;color:#6fdc7c;left:675.90px;transform:matrix(0.9527,0,.0005,1,0,0);">Reply</div>
<svg style="left:699px;top:330px" width="2" height="7"><rect x="0.90" y="0.00" width="1.00" height="6.20" fill="#4c4c4c"/></svg>
<div class="t" style="top:328.02px;font-size:8.03px;color:#22bcc6;left:708.30px;transform:matrix(0.9527,0,.0005,1,0,0);">Acknowledge</div>
<svg style="left:156px;top:348px" width="199" height="75"><rect x="0.00" y="0.20" width="198.40" height="74.10" fill="#333333" rx="2"/></svg>
<svg style="left:163px;top:352px" width="37" height="38"><rect x="0.00" y="0.90" width="37.00" height="37.00" fill="#12171a" rx="2"/></svg>
<svg style="left:163px;top:352px" width="37" height="38"><g transform="translate(0 0.9)"><g transform="translate(0 -.9)" fill="none" stroke="#f2ab3e" stroke-width="1.55" stroke-linejoin="round" stroke-linecap="round"><path d="M18.6 8.6 C20.6 12.6 24.9 15.6 24.9 20.4 C24.9 23.9 22.1 26.3 18.6 26.3 C15.1 26.3 12.3 23.9 12.3 20.4 C12.3 15.6 16.6 12.6 18.6 8.6Z"/><path d="M18.6 16.6 C19.5 18.7 21.4 20 21.4 22.4 C21.4 24.4 20.2 26 18.6 26 C17 26 15.8 24.4 15.8 22.4 C15.8 20 17.7 18.7 18.6 16.6Z"/><path d="M13.2 28.3 Q18.6 26.9 24 28.3"/></g></g></svg>
<div class="t" style="top:352.02px;font-size:6.66px;color:#b4b4b4;left:295.56px;transform:matrix(0.9517,0,.0005,1,0,0);transform-origin:right center;">2024-01-24 20:55</div>
<svg style="left:206px;top:364px" width="11" height="11"><g transform="translate(0.7 0.4) scale(1.062 1.062)"><circle cx="4.8" cy="4.8" r="4.8" fill="rgba(14,60,64,.55)"/><circle cx="4.8" cy="3.3" r="1.15" fill="#21c3cb"/><path d="M2.7 7 C2.7 5.5 3.6 4.9 4.8 4.9 C6 4.9 6.9 5.5 6.9 7Z" fill="#21c3cb"/></g></svg>
<svg style="left:206px;top:376px" width="11" height="11"><g transform="translate(0.7 0.8) scale(1.062 1.062)"><circle cx="4.8" cy="4.8" r="4.8" fill="rgba(74,40,18,.5)"/><rect x="2.5" y="2.5" width="4.6" height="4.6" rx=".4" fill="#ef7d2a"/><rect x="4.2" y="2.5" width="1.2" height="1.3" fill="#5a3418"/><rect x="3.5" y="4.6" width="2.6" height=".8" fill="#b85d1c"/></g></svg>
<svg style="left:206px;top:389px" width="11" height="11"><g transform="translate(0.7 0.3) scale(1.062 1.062)"><circle cx="4.8" cy="4.8" r="4.8" fill="rgba(24,66,40,.5)"/><g fill="#5fe08a"><circle cx="4.8" cy="2.9" r=".85"/><rect x="4.15" y="4" width="1.3" height="3.2" rx=".4"/><circle cx="2.9" cy="4.5" r=".7"/><rect x="2.35" y="5.4" width="1.1" height="1.8" rx=".3"/><circle cx="6.7" cy="4.5" r=".7"/><rect x="6.15" y="5.4" width="1.1" height="1.8" rx=".3"/></g></g></svg>
<div class="t" style="top:364.02px;font-size:8.2px;color:#ffffff;left:219.40px;-webkit-text-stroke:.16px #fff;transform:matrix(0.9523,0,.0005,1,0,0);">Test fenglin</div>
<div class="t" style="top:377.02px;font-size:7.82px;color:#e4e4e4;left:219.40px;transform:matrix(0.9526,0,.0005,1,0,0);">test 002</div>
<div class="t" style="top:389.02px;font-size:8.04px;color:#e4e4e4;left:219.40px;transform:matrix(0.9528,0,.0005,1,0,0);">Operator name</div>
<svg style="left:338px;top:389px" width="10" height="10"><g transform="translate(0.7 0.8)"><g fill="#f45c66"><circle cx="4.5" cy="2.3" r="2.15"/><path d="M1.6 4.9 H3.5 L2.9 9.1 H0 Z"/><path d="M4 5.3 L4.5 4.9 L5 5.3 L5.5 9.1 H3.5 Z"/><path d="M5.5 4.9 H7.4 L9 9.1 H6.1 Z"/></g></g></svg>
<svg style="left:163px;top:403px" width="186" height="1"><rect x="0.00" y="0.00" width="185.50" height="1.00" fill="#444444"/></svg>
<svg style="left:162px;top:407px" width="34" height="12"><rect x="0.80" y="0.70" width="32.60" height="10.60" fill="rgba(240,169,60,.2)" rx="5.3"/></svg>
<div class="t" style="top:408.02px;font-size:7.01px;color:#d8a048;left:166.15px;transform:matrix(0.953,0,.0005,1,0,0);transform-origin:center center;">Thermal</div>
<div class="t" style="top:408.02px;font-size:7.72px;color:#6fdc7c;left:267.80px;transform:matrix(0.9527,0,.0005,1,0,0);">Reply</div>
<svg style="left:291px;top:410px" width="2" height="7"><rect x="0.80" y="0.30" width="1.00" height="6.20" fill="#4c4c4c"/></svg>
<div class="t" style="top:408.02px;font-size:8.03px;color:#22bcc6;left:300.20px;transform:matrix(0.9527,0,.0005,1,0,0);">Acknowledge</div>
<svg style="left:360px;top:348px" width="199" height="75"><rect x="0.00" y="0.20" width="198.40" height="74.10" fill="#333333" rx="2"/></svg>
<svg style="left:367px;top:352px" width="37" height="38"><rect x="0.00" y="0.90" width="37.00" height="37.00" fill="#12171a" rx="2"/></svg>
<svg style="left:367px;top:352px" width="37" height="38"><g transform="translate(0 0.9)"><g transform="translate(0 -.9)" fill="none" stroke="#f2ab3e" stroke-width="1.55" stroke-linejoin="round" stroke-linecap="round"><path d="M18.6 8.6 C20.6 12.6 24.9 15.6 24.9 20.4 C24.9 23.9 22.1 26.3 18.6 26.3 C15.1 26.3 12.3 23.9 12.3 20.4 C12.3 15.6 16.6 12.6 18.6 8.6Z"/><path d="M18.6 16.6 C19.5 18.7 21.4 20 21.4 22.4 C21.4 24.4 20.2 26 18.6 26 C17 26 15.8 24.4 15.8 22.4 C15.8 20 17.7 18.7 18.6 16.6Z"/><path d="M13.2 28.3 Q18.6 26.9 24 28.3"/></g></g></svg>
<div class="t" style="top:352.02px;font-size:6.66px;color:#b4b4b4;left:499.56px;transform:matrix(0.9517,0,.0005,1,0,0);transform-origin:right center;">2024-01-24 20:55</div>
<svg style="left:410px;top:364px" width="11" height="11"><g transform="translate(0.7 0.4) scale(1.062 1.062)"><circle cx="4.8" cy="4.8" r="4.8" fill="rgba(14,60,64,.55)"/><circle cx="4.8" cy="3.3" r="1.15" fill="#21c3cb"/><path d="M2.7 7 C2.7 5.5 3.6 4.9 4.8 4.9 C6 4.9 6.9 5.5 6.9 7Z" fill="#21c3cb"/></g></svg>
<svg style="left:410px;top:376px" width="11" height="11"><g transform="translate(0.7 0.8) scale(1.062 1.062)"><circle cx="4.8" cy="4.8" r="4.8" fill="rgba(74,40,18,.5)"/><rect x="2.5" y="2.5" width="4.6" height="4.6" rx=".4" fill="#ef7d2a"/><rect x="4.2" y="2.5" width="1.2" height="1.3" fill="#5a3418"/><rect x="3.5" y="4.6" width="2.6" height=".8" fill="#b85d1c"/></g></svg>
<svg style="left:410px;top:389px" width="11" height="11"><g transform="translate(0.7 0.3) scale(1.062 1.062)"><circle cx="4.8" cy="4.8" r="4.8" fill="rgba(24,66,40,.5)"/><g fill="#5fe08a"><circle cx="4.8" cy="2.9" r=".85"/><rect x="4.15" y="4" width="1.3" height="3.2" rx=".4"/><circle cx="2.9" cy="4.5" r=".7"/><rect x="2.35" y="5.4" width="1.1" height="1.8" rx=".3"/><circle cx="6.7" cy="4.5" r=".7"/><rect x="6.15" y="5.4" width="1.1" height="1.8" rx=".3"/></g></g></svg>
<div class="t" style="top:364.02px;font-size:8.2px;color:#ffffff;left:423.40px;-webkit-text-stroke:.16px #fff;transform:matrix(0.9523,0,.0005,1,0,0);">Test fenglin</div>
<div class="t" style="top:377.02px;font-size:7.3px;color:#8c8c8c;left:423.40px;transform:matrix(1,0,.0005,1,0,0);">-</div>
<div class="t" style="top:389.02px;font-size:7.3px;color:#8c8c8c;left:423.40px;transform:matrix(1,0,.0005,1,0,0);">-</div>
<svg style="left:367px;top:403px" width="186" height="1"><rect x="0.00" y="0.00" width="185.50" height="1.00" fill="#444444"/></svg>
<svg style="left:366px;top:407px" width="34" height="12"><rect x="0.80" y="0.70" width="32.60" height="10.60" fill="rgba(240,169,60,.2)" rx="5.3"/></svg>
<div class="t" style="top:408.02px;font-size:7.01px;color:#d8a048;left:370.15px;transform:matrix(0.953,0,.0005,1,0,0);transform-origin:center center;">Thermal</div>
<div class="t" style="top:408.02px;font-size:7.72px;color:#6fdc7c;left:471.80px;transform:matrix(0.9527,0,.0005,1,0,0);">Reply</div>
<svg style="left:495px;top:410px" width="2" height="7"><rect x="0.80" y="0.30" width="1.00" height="6.20" fill="#4c4c4c"/></svg>
<div class="t" style="top:408.02px;font-size:8.03px;color:#22bcc6;left:504.20px;transform:matrix(0.9527,0,.0005,1,0,0);">Acknowledge</div>
<svg style="left:206px;top:189px" width="54" height="14"><rect x="0.00" y="0.80" width="53.20" height="12.40" fill="#0c0c0c" rx="2"/></svg>
<div class="t" style="top:191.02px;font-size:8.0px;color:#f0f0f0;left:209.89px;transform:matrix(0.952,0,.0005,1,0,0);transform-origin:center center;">Tenant name</div>
<svg style="left:213px;top:209px" width="8" height="13"><g transform="translate(0 0.3)"><path d="M0 0 L7.9 4.9 L4.7 6 L6.3 9.3 L4.5 10.2 L2.9 6.9 L0 8.9 Z" fill="#f4f4f4" stroke="#1a1a1a" stroke-width=".4" stroke-linejoin="round"/></g></svg>
<svg style="left:415px;top:166px" width="9" height="13"><g transform="translate(0.7 0.9)"><path d="M0 0 L7.9 4.9 L4.7 6 L6.3 9.3 L4.5 10.2 L2.9 6.9 L0 8.9 Z" fill="#f4f4f4" stroke="#1a1a1a" stroke-width=".4" stroke-linejoin="round"/></g></svg>
<svg style="left:779px;top:43px" width="2" height="10"><rect x="0.00" y="0.00" width="2.00" height="10.00" fill="#1fc8cf" rx="1"/></svg>
<div class="t" style="top:43.02px;font-size:9.11px;color:#f0f0f0;left:787.80px;-webkit-text-stroke:.15px #f0f0f0;transform:matrix(0.9526,0,.0005,1,0,0);">Events</div>
<svg style="left:941px;top:44px" width="9" height="8"><g transform="translate(0.8 0)"><path d="M4 .5 V7.5 M.5 4 H7.5" stroke="#e6e6e6" stroke-width=".85"/></g></svg>
<svg style="left:779px;top:58px" width="182" height="1"><rect x="0.30" y="0.00" width="181.20" height="1.00" fill="#2e2e2e"/></svg>
<div class="t" style="top:68.02px;font-size:9.26px;color:#ececec;font-weight:bold;left:849.36px;-webkit-text-stroke:0;transform:matrix(0.9263,0,.0005,1,0,0);transform-origin:center center;">Jan, 2022</div>
<svg style="left:793px;top:73px" width="2" height="2"><g transform="translate(0.6 0.3)"><path d="M-0.4 -2.2 L-2.6 0 L-0.4 2.2 M2.6 -2.2 L0.4 0 L2.6 2.2" fill="none" stroke="#e8e8e8" stroke-width="1.25"/></g></svg>
<svg style="left:812px;top:73px" width="1" height="2"><g transform="translate(0 0.3)"><path d="M1 -2.2 L-1.2 0 L1 2.2" fill="none" stroke="#e8e8e8" stroke-width="1.25"/></g></svg>
<svg style="left:945px;top:73px" width="2" height="2"><g transform="translate(0.7 0.3)"><path d="M0.4 -2.2 L2.6 0 L0.4 2.2 M-2.6 -2.2 L-0.4 0 L-2.6 2.2" fill="none" stroke="#e8e8e8" stroke-width="1.25"/></g></svg>
<svg style="left:929px;top:73px" width="2" height="1"><g transform="translate(0.6 0)"><path d="M-1 -2.2 L1.2 0 L-1 2.2" fill="none" stroke="#1fc8cf" stroke-width="1.2"/></g></svg>
<div class="t" style="top:90.02px;font-size:7.9px;color:#e6e6e6;left:790.57px;-webkit-text-stroke:.3px #e6e6e6;transform:matrix(0.95,0,.0005,1,0,0);transform-origin:center center;">Su</div>
<div class="t" style="top:90.02px;font-size:7.9px;color:#e6e6e6;left:814.85px;-webkit-text-stroke:.3px #e6e6e6;transform:matrix(0.95,0,.0005,1,0,0);transform-origin:center center;">Mo</div>
<div class="t" style="top:90.02px;font-size:7.9px;color:#e6e6e6;left:840.80px;-webkit-text-stroke:.3px #e6e6e6;transform:matrix(0.95,0,.0005,1,0,0);transform-origin:center center;">Tu</div>
<div class="t" style="top:90.02px;font-size:7.9px;color:#e6e6e6;left:864.34px;-webkit-text-stroke:.3px #e6e6e6;transform:matrix(0.95,0,.0005,1,0,0);transform-origin:center center;">We</div>
<div class="t" style="top:90.02px;font-size:7.9px;color:#e6e6e6;left:890.51px;-webkit-text-stroke:.3px #e6e6e6;transform:matrix(0.95,0,.0005,1,0,0);transform-origin:center center;">Th</div>
<div class="t" style="top:90.02px;font-size:7.9px;color:#e6e6e6;left:915.45px;-webkit-text-stroke:.3px #e6e6e6;transform:matrix(0.95,0,.0005,1,0,0);transform-origin:center center;">Fri</div>
<div class="t" style="top:90.02px;font-size:7.9px;color:#e6e6e6;left:940.15px;-webkit-text-stroke:.3px #e6e6e6;transform:matrix(0.95,0,.0005,1,0,0);transform-origin:center center;">Sa</div>
<svg style="left:887px;top:141px" width="15" height="16"><rect x="0.40" y="0.90" width="14.60" height="14.30" fill="#0f4a4d" rx="3"/></svg>
<svg style="left:862px;top:160px" width="16" height="16"><rect x="0.60" y="0.50" width="15.20" height="15.20" fill="#0a1314" rx="3.8" stroke="#0e5a60" stroke-width="0.9"/></svg>
<div class="t" style="top:107.02px;font-size:7.8px;color:#bababa;left:917.88px;transform:matrix(0.95,0,.0005,1,0,0);transform-origin:center center;">1</div>
<div class="t" style="top:107.02px;font-size:7.8px;color:#bababa;left:942.81px;transform:matrix(0.95,0,.0005,1,0,0);transform-origin:center center;">2</div>
<div class="t" style="top:126.02px;font-size:7.8px;color:#bababa;left:793.23px;transform:matrix(0.95,0,.0005,1,0,0);transform-origin:center center;">3</div>
<div class="t" style="top:126.02px;font-size:7.8px;color:#bababa;left:818.16px;transform:matrix(0.95,0,.0005,1,0,0);transform-origin:center center;">4</div>
<div class="t" style="top:126.02px;font-size:7.8px;color:#bababa;left:843.09px;transform:matrix(0.95,0,.0005,1,0,0);transform-origin:center center;">5</div>
<div class="t" style="top:126.02px;font-size:7.8px;color:#bababa;left:868.02px;transform:matrix(0.95,0,.0005,1,0,0);transform-origin:center center;">6</div>
<div class="t" style="top:126.02px;font-size:7.8px;color:#bababa;left:892.95px;transform:matrix(0.95,0,.0005,1,0,0);transform-origin:center center;">7</div>
<div class="t" style="top:126.02px;font-size:7.8px;color:#bababa;left:917.88px;transform:matrix(0.95,0,.0005,1,0,0);transform-origin:center center;">8</div>
<div class="t" style="top:126.02px;font-size:7.8px;color:#bababa;left:942.81px;transform:matrix(0.95,0,.0005,1,0,0);transform-origin:center center;">9</div>
<div class="t" style="top:144.02px;font-size:7.8px;color:#bababa;left:791.06px;transform:matrix(0.95,0,.0005,1,0,0);transform-origin:center center;">10</div>
<div class="t" style="top:144.02px;font-size:7.8px;color:#bababa;left:816.28px;transform:matrix(0.95,0,.0005,1,0,0);transform-origin:center center;">11</div>
<div class="t" style="top:144.02px;font-size:7.8px;color:#bababa;left:840.92px;transform:matrix(0.95,0,.0005,1,0,0);transform-origin:center center;">12</div>
<div class="t" style="top:144.02px;font-size:7.8px;color:#bababa;left:865.85px;transform:matrix(0.95,0,.0005,1,0,0);transform-origin:center center;">13</div>
<div class="t" style="top:144.02px;font-size:7.8px;color:#25d0d8;left:890.78px;transform:matrix(0.95,0,.0005,1,0,0);transform-origin:center center;">14</div>
<div class="t" style="top:144.02px;font-size:7.8px;color:#bababa;left:915.71px;transform:matrix(0.95,0,.0005,1,0,0);transform-origin:center center;">15</div>
<div class="t" style="top:144.02px;font-size:7.8px;color:#bababa;left:940.64px;transform:matrix(0.95,0,.0005,1,0,0);transform-origin:center center;">16</div>
<div class="t" style="top:163.02px;font-size:7.8px;color:#bababa;left:791.06px;transform:matrix(0.95,0,.0005,1,0,0);transform-origin:center center;">17</div>
<div class="t" style="top:163.02px;font-size:7.8px;color:#bababa;left:815.99px;transform:matrix(0.95,0,.0005,1,0,0);transform-origin:center center;">18</div>
<div class="t" style="top:163.02px;font-size:7.8px;color:#bababa;left:840.92px;transform:matrix(0.95,0,.0005,1,0,0);transform-origin:center center;">19</div>
<div class="t" style="top:163.02px;font-size:7.8px;color:#25d0d8;left:865.85px;transform:matrix(0.95,0,.0005,1,0,0);transform-origin:center center;">20</div>
<div class="t" style="top:163.02px;font-size:7.8px;color:#bababa;left:890.78px;transform:matrix(0.95,0,.0005,1,0,0);transform-origin:center center;">21</div>
<div class="t" style="top:163.02px;font-size:7.8px;color:#bababa;left:915.71px;transform:matrix(0.95,0,.0005,1,0,0);transform-origin:center center;">22</div>
<div class="t" style="top:163.02px;font-size:7.8px;color:#bababa;left:940.64px;transform:matrix(0.95,0,.0005,1,0,0);transform-origin:center center;">23</div>
<div class="t" style="top:182.02px;font-size:7.8px;color:#bababa;left:791.06px;transform:matrix(0.95,0,.0005,1,0,0);transform-origin:center center;">24</div>
<div class="t" style="top:182.02px;font-size:7.8px;color:#bababa;left:815.99px;transform:matrix(0.95,0,.0005,1,0,0);transform-origin:center center;">25</div>
<div class="t" style="top:182.02px;font-size:7.8px;color:#bababa;left:840.92px;transform:matrix(0.95,0,.0005,1,0,0);transform-origin:center center;">26</div>
<div class="t" style="top:182.02px;font-size:7.8px;color:#bababa;left:865.85px;transform:matrix(0.95,0,.0005,1,0,0);transform-origin:center center;">27</div>
<div class="t" style="top:182.02px;font-size:7.8px;color:#bababa;left:890.78px;transform:matrix(0.95,0,.0005,1,0,0);transform-origin:center center;">28</div>
<div class="t" style="top:182.02px;font-size:7.8px;color:#bababa;left:915.71px;transform:matrix(0.95,0,.0005,1,0,0);transform-origin:center center;">29</div>
<div class="t" style="top:182.02px;font-size:7.8px;color:#bababa;left:940.64px;transform:matrix(0.95,0,.0005,1,0,0);transform-origin:center center;">30</div>
<div class="t" style="top:201.02px;font-size:7.8px;color:#bababa;left:791.06px;transform:matrix(0.95,0,.0005,1,0,0);transform-origin:center center;">31</div>
<svg style="left:928px;top:72px" width="8" height="13"><g transform="translate(0 0.8)"><path d="M0 0 L7.9 4.9 L4.7 6 L6.3 9.3 L4.5 10.2 L2.9 6.9 L0 8.9 Z" fill="#f4f4f4" stroke="#1a1a1a" stroke-width=".4" stroke-linejoin="round"/></g></svg>
<svg style="left:875px;top:169px" width="9" height="13"><g transform="translate(0.5 0.5)"><path d="M0 0 L7.9 4.9 L4.7 6 L6.3 9.3 L4.5 10.2 L2.9 6.9 L0 8.9 Z" fill="#f4f4f4" stroke="#1a1a1a" stroke-width=".4" stroke-linejoin="round"/></g></svg>
<svg style="left:779px;top:220px" width="182" height="2"><rect x="0.30" y="0.60" width="181.20" height="1.00" fill="#262626"/></svg>
<div class="t" style="top:231.02px;font-size:9.65px;color:#f0f0f0;left:787.60px;-webkit-text-stroke:.15px #f0f0f0;transform:matrix(0.9528,0,.0005,1,0,0);">Today</div>
<svg style="left:941px;top:231px" width="9" height="9"><g transform="translate(0.8 0.8)"><path d="M4 .5 V7.5 M.5 4 H7.5" stroke="#e6e6e6" stroke-width=".85"/></g></svg>
<svg style="left:958px;top:250px" width="3" height="48"><rect x="0.00" y="0.70" width="2.40" height="46.50" fill="#15868c" rx="1"/></svg>
<div class="t" style="top:252.02px;font-size:8.02px;color:#ef7d2a;font-weight:bold;left:787.60px;transform:matrix(0.9526,0,.0005,1,0,0);">Event title</div>
<div class="t" style="top:252.02px;font-size:7.78px;color:#d4d4d4;left:932.91px;transform:matrix(0.9529,0,.0005,1,0,0);transform-origin:right center;">11:20</div>
<div class="t" style="top:265.02px;font-size:7.98px;color:#ef7d2a;left:787.60px;transform:matrix(0.952,0,.0005,1,0,0);">Colleagues who do not have urgent work</div>
<div class="t" style="top:275.02px;font-size:7.95px;color:#ef7d2a;left:787.60px;transform:matrix(0.9519,0,.0005,1,0,0);">today can now leave work early.</div>
<svg style="left:787px;top:288px" width="11" height="11"><g transform="translate(0.7 0.8)"><circle cx="5" cy="5" r="5" fill="#0f2e31"/><circle cx="5" cy="3.7" r="1.25" fill="#21c3cb"/><path d="M2.8 7.5 C2.8 5.8 3.7 5.3 5 5.3 C6.3 5.3 7.2 5.8 7.2 7.5Z" fill="#21c3cb"/></g></svg>
<div class="t" style="top:289.02px;font-size:7.97px;color:#e0e0e0;left:801.00px;transform:matrix(0.9523,0,.0005,1,0,0);">Liu xiaoyan; Liu dayan;  Liu zhongyan; Liu ...</div>
<svg style="left:787px;top:304px" width="166" height="2"><rect x="0.60" y="0.80" width="164.50" height="1.00" fill="#3a3a3a"/></svg>
<div class="t" style="top:312.02px;font-size:8.02px;color:#1fb0b8;font-weight:bold;left:787.60px;transform:matrix(0.9526,0,.0005,1,0,0);">Event title</div>
<div class="t" style="top:312.02px;font-size:7.78px;color:#d4d4d4;left:932.91px;transform:matrix(0.9529,0,.0005,1,0,0);transform-origin:right center;">11:20</div>
<div class="t" style="top:325.02px;font-size:7.99px;color:#1b9ca4;left:787.60px;transform:matrix(0.9527,0,.0005,1,0,0);">Colleagues who do not have urgent work today</div>
<div class="t" style="top:336.02px;font-size:8.01px;color:#1b9ca4;left:787.60px;transform:matrix(0.9529,0,.0005,1,0,0);">cannnnnnn now leave work early do not have</div>
<div class="t" style="top:346.02px;font-size:8.04px;color:#1b9ca4;left:787.60px;transform:matrix(0.9521,0,.0005,1,0,0);">urgent work today can now leave work eaave</div>
<div class="t" style="top:357.02px;font-size:7.95px;color:#1b9ca4;left:787.60px;transform:matrix(0.9527,0,.0005,1,0,0);">work ea</div>
<svg style="left:787px;top:370px" width="11" height="11"><g transform="translate(0.7 0.8)"><circle cx="5" cy="5" r="5" fill="#0f2e31"/><circle cx="5" cy="3.7" r="1.25" fill="#21c3cb"/><path d="M2.8 7.5 C2.8 5.8 3.7 5.3 5 5.3 C6.3 5.3 7.2 5.8 7.2 7.5Z" fill="#21c3cb"/></g></svg>
<div class="t" style="top:371.02px;font-size:8.19px;color:#1b9ca4;left:801.00px;transform:matrix(0.9525,0,.0005,1,0,0);">All tenant</div>
<svg style="left:787px;top:385px" width="166" height="2"><rect x="0.60" y="0.70" width="164.50" height="1.00" fill="#3a3a3a"/></svg>
<div class="t" style="top:394.02px;font-size:8.02px;color:#a8a8a8;font-weight:bold;left:787.60px;transform:matrix(0.9526,0,.0005,1,0,0);">Event title</div>
<div class="t" style="top:394.02px;font-size:7.78px;color:#d4d4d4;left:932.91px;transform:matrix(0.9529,0,.0005,1,0,0);transform-origin:right center;">11:20</div>
<div class="t" style="top:407.02px;font-size:7.98px;color:#a0a0a0;left:787.60px;transform:matrix(0.952,0,.0005,1,0,0);">Colleagues who do not have urgent work</div>
<svg style="left:787px;top:420px" width="11" height="11"><g transform="translate(0.7 0.4)"><circle cx="5" cy="5" r="5" fill="#1e1e1e"/><circle cx="5" cy="3.7" r="1.25" fill="#a0a0a0"/><path d="M2.8 7.5 C2.8 5.8 3.7 5.3 5 5.3 C6.3 5.3 7.2 5.8 7.2 7.5Z" fill="#a0a0a0"/></g></svg>
<div class="t" style="top:421.02px;font-size:8.19px;color:#a0a0a0;left:801.00px;transform:matrix(0.9525,0,.0005,1,0,0);">All tenant</div>
<svg style="left:787px;top:436px" width="166" height="2"><rect x="0.60" y="0.90" width="164.50" height="1.00" fill="#3a3a3a"/></svg>
<div class="t" style="top:444.02px;font-size:8.02px;color:#a8a8a8;font-weight:bold;left:787.60px;transform:matrix(0.9526,0,.0005,1,0,0);">Event title</div>
<div class="t" style="top:444.02px;font-size:7.78px;color:#d4d4d4;left:932.91px;transform:matrix(0.9529,0,.0005,1,0,0);transform-origin:right center;">11:20</div>
<div class="t" style="top:458.02px;font-size:7.98px;color:#a0a0a0;left:787.60px;transform:matrix(0.952,0,.0005,1,0,0);">Colleagues who do not have urgent work</div>
</div>
</body>
</html>
